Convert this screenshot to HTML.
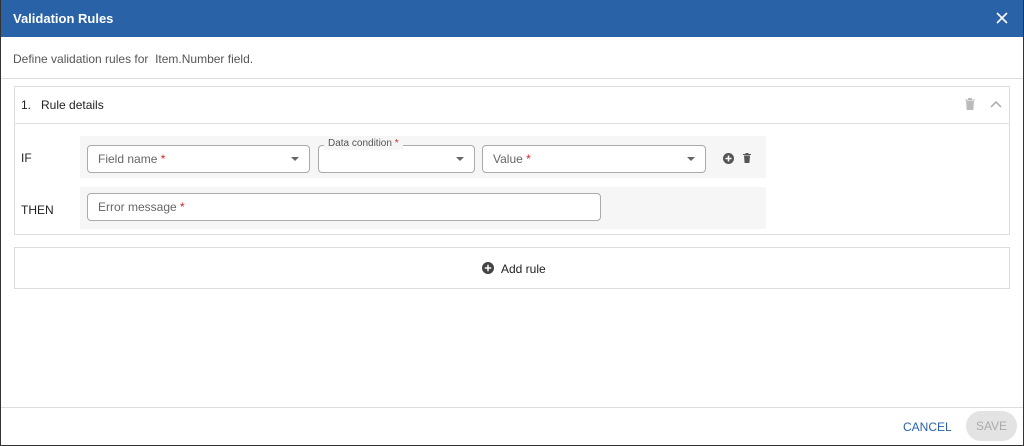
<!DOCTYPE html>
<html><head><style>
*{box-sizing:border-box;margin:0;padding:0}
body{width:1024px;height:446px;background:#fff;font-family:"Liberation Sans",sans-serif;position:relative;overflow:hidden;}
.abs{position:absolute}
.hdr{left:0;top:0;width:1024px;height:37px;background:#2a62a8;color:#fff;font-size:13px;font-weight:bold}
.fld{position:absolute;border:1px solid #aaa;border-radius:4px;background:#fff;font-size:12px;color:#666;padding-left:10px;line-height:26px}
.req{color:#d22}
.arr{position:absolute;right:10px;top:11px;width:0;height:0;border-left:4px solid transparent;border-right:4px solid transparent;border-top:4px solid #666}
.lbl{font-size:12px;color:#222}
</style></head><body>
<div class="abs hdr"><span class="abs" style="left:13px;top:11px">Validation Rules</span>
<svg class="abs" style="left:996px;top:12px" width="12" height="12" viewBox="0 0 12 12"><path d="M1 1L11 11M11 1L1 11" stroke="#fff" stroke-width="1.6"/></svg></div>
<div class="abs" style="left:13px;top:52px;font-size:12px;color:#555">Define validation rules for &nbsp;Item.Number field.</div>
<div class="abs" style="left:0;top:78px;width:1024px;height:1px;background:#ddd"></div>
<div class="abs" style="left:14px;top:86px;width:996px;height:149px;border:1px solid #ddd"></div>
<div class="abs" style="left:14px;top:123px;width:996px;height:1px;background:#ddd"></div>
<div class="abs lbl" style="left:21px;top:98px">1.&nbsp;&nbsp;&nbsp;Rule details</div>
<svg class="abs" style="left:965px;top:98px" width="10" height="12" viewBox="0 0 10 12"><path d="M0 1.5h10v1H0zM3 0h4v1.5H3zM1 3h8l-.7 9H1.7z" fill="#bbb"/></svg>
<svg class="abs" style="left:990px;top:100px" width="12" height="8" viewBox="0 0 12 8"><path d="M1 7L6 2L11 7" stroke="#aaa" stroke-width="1.5" fill="none"/></svg>
<div class="abs lbl" style="left:21px;top:151px">IF</div>
<div class="abs lbl" style="left:21px;top:203px">THEN</div>
<div class="abs" style="left:80px;top:136px;width:686px;height:42px;background:#f6f6f6"></div>
<div class="abs" style="left:80px;top:187px;width:686px;height:42px;background:#f6f6f6"></div>
<div class="fld" style="left:87px;top:145px;width:223px;height:28px">Field name <span class="req">*</span><div class="arr"></div></div>
<div class="fld" style="left:318px;top:145px;width:157px;height:28px"><div class="arr"></div></div>
<div class="abs" style="left:324px;top:138px;background:#f6f6f6;padding:0 4px;font-size:10px;color:#555;line-height:12px">Data condition <span class="req">*</span></div>
<div class="fld" style="left:482px;top:145px;width:224px;height:28px">Value <span class="req">*</span><div class="arr"></div></div>
<svg class="abs" style="left:723px;top:153px" width="11" height="11" viewBox="0 0 11 11"><circle cx="5.5" cy="5.5" r="5.5" fill="#555"/><path d="M5.5 2.5v6M2.5 5.5h6" stroke="#fff" stroke-width="1.5"/></svg>
<svg class="abs" style="left:743px;top:153px" width="8" height="10" viewBox="0 0 8 10"><path d="M0 1h8v1H0zM2.5 0h3v1h-3zM1 2.5h6L6.4 10H1.6z" fill="#555"/></svg>
<div class="fld" style="left:87px;top:193px;width:514px;height:28px">Error message <span class="req">*</span></div>
<div class="abs" style="left:14px;top:247px;width:996px;height:42px;border:1px solid #ddd"></div>
<svg class="abs" style="left:482px;top:262px" width="12" height="12" viewBox="0 0 12 12"><circle cx="6" cy="6" r="6" fill="#444"/><path d="M6 2.8v6.4M2.8 6h6.4" stroke="#fff" stroke-width="1.5"/></svg>
<div class="abs lbl" style="left:501px;top:262px">Add rule</div>
<div class="abs" style="left:0;top:407px;width:1024px;height:1px;background:#ddd"></div>
<div class="abs" style="left:903px;top:420px;font-size:12px;color:#2a62a8">CANCEL</div>
<div class="abs" style="left:966px;top:411px;width:51px;height:30px;border-radius:15px;background:#e3e3e3;color:#aaa;font-size:12px;text-align:center;line-height:30px">SAVE</div>
<div class="abs" style="left:0;top:0;width:1024px;height:446px;border:1px solid #333;border-top:none;pointer-events:none"></div>
</body></html>
